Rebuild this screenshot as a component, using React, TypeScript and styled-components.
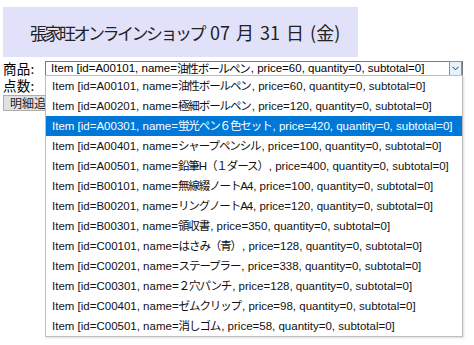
import React from "react";
import styled, { createGlobalStyle } from "styled-components";

const Global = createGlobalStyle`
  html, body { margin: 0; padding: 0; background: #fff; }
  body { font-family: "Liberation Sans", "Noto Sans CJK JP", sans-serif; color: #000; }
`;

const Page = styled.div`
  position: relative;
  width: 474px;
  height: 345px;
  overflow: hidden;
  padding: 7px 0 0 3px;
  box-sizing: border-box;
`;

const Header = styled.div`
  width: 355px;
  height: 50px;
  background: #e1e1fa;
  display: flex;
  align-items: center;
  padding-left: 27px;
  box-sizing: border-box;
  font-family: "Noto Sans CJK JP", sans-serif;
  font-size: 18px;
  color: #222;
  white-space: nowrap;
  word-spacing: 2px;
`;

const Shop = styled.span`
  font-size: 17px;
  letter-spacing: -2.5px;
  margin-right: 6px;
`;

const Form = styled.div`
  display: flex;
  flex-direction: column;
  margin-top: 3px;
`;

const Row = styled.div`
  display: flex;
  align-items: center;
  height: 16px;
  margin-bottom: 1px;
`;

const Label = styled.span`
  width: 42px;
  font-family: "Noto Sans CJK JP", sans-serif;
  font-size: 13.5px;
  line-height: 16px;
  letter-spacing: 0.3px;
`;

const Select = styled.div`
  width: 418px;
  height: 15px;
  border: 1px solid #7a7a7a;
  box-sizing: border-box;
  display: flex;
  align-items: center;
  font-size: 11.5px;
  padding-left: 5px;
  position: relative;
  white-space: nowrap;
`;

const Arrow = styled.div`
  position: absolute;
  right: 0;
  top: -1px;
  width: 13px;
  height: 15px;
  border: 1px solid #569de5;
  background: #e5f1fb;
  box-sizing: border-box;
  display: flex;
  align-items: center;
  justify-content: center;
`;

const Button = styled.button`
  margin-top: 2px;
  width: 60px;
  height: 16px;
  padding: 0 0 0 6px;
  text-align: left;
  border: 1px solid #adadad;
  background: #e1e1e1;
  font-family: "Noto Sans CJK JP", sans-serif;
  font-size: 12px;
  line-height: 14px;
  color: #222;
`;

const List = styled.ul`
  position: absolute;
  left: 45px;
  top: 75px;
  width: 418px;
  margin: 0;
  padding: 0;
  list-style: none;
  background: #fff;
  border: 1px solid #bdbdbd;
  box-sizing: border-box;
  box-shadow: 1px 1px 2px rgba(0, 0, 0, 0.15);
`;

const Option = styled.li<{ $active?: boolean }>`
  height: 20px;
  line-height: 20px;
  padding-left: 6px;
  font-size: 11.5px;
  white-space: nowrap;
  background: ${(p) => (p.$active ? "#0078d7" : "transparent")};
  color: ${(p) => (p.$active ? "#fff" : "#111")};
`;

const Name = styled.span`
  font-size: 11.5px;
  letter-spacing: -1.1px;
  margin-right: 1px;
`;

const items: [string, string, number][] = [
  ["A00101", "油性ボールペン", 60],
  ["A00201", "極細ボールペン", 120],
  ["A00301", "蛍光ペン６色セット", 420],
  ["A00401", "シャープペンシル", 100],
  ["A00501", "鉛筆H（１ダース）", 400],
  ["B00101", "無線綴ノートA4", 100],
  ["B00201", "リングノートA4", 120],
  ["B00301", "領収書", 350],
  ["C00101", "はさみ（青）", 128],
  ["C00201", "ステープラー", 338],
  ["C00301", "２穴パンチ", 128],
  ["C00401", "ゼムクリップ", 98],
  ["C00501", "消しゴム", 58],
];

const ItemText = ({ it }: { it: [string, string, number] }) => (
  <>
    Item [id={it[0]}, name=<Name>{it[1]}</Name>, price={it[2]}, quantity=0, subtotal=0]
  </>
);

export default function App() {
  return (
    <Page>
      <Global />
      <Header>
        <Shop>張家旺オンラインショップ</Shop>07 月 31 日 (金)
      </Header>
      <Form>
        <Row>
          <Label>商品:</Label>
          <Select>
            <ItemText it={items[0]} />
            <Arrow>
              <svg width="7" height="5" viewBox="0 0 7 5">
                <path d="M0.5 0.8 L3.5 3.8 L6.5 0.8" fill="none" stroke="#333" strokeWidth="1" />
              </svg>
            </Arrow>
          </Select>
        </Row>
        <Row>
          <Label>点数:</Label>
        </Row>
        <Row>
          <Button>明細追加</Button>
        </Row>
      </Form>
      <List>
        {items.map((it, i) => (
          <Option key={it[0]} $active={i === 2}>
            <ItemText it={it} />
          </Option>
        ))}
      </List>
    </Page>
  );
}
